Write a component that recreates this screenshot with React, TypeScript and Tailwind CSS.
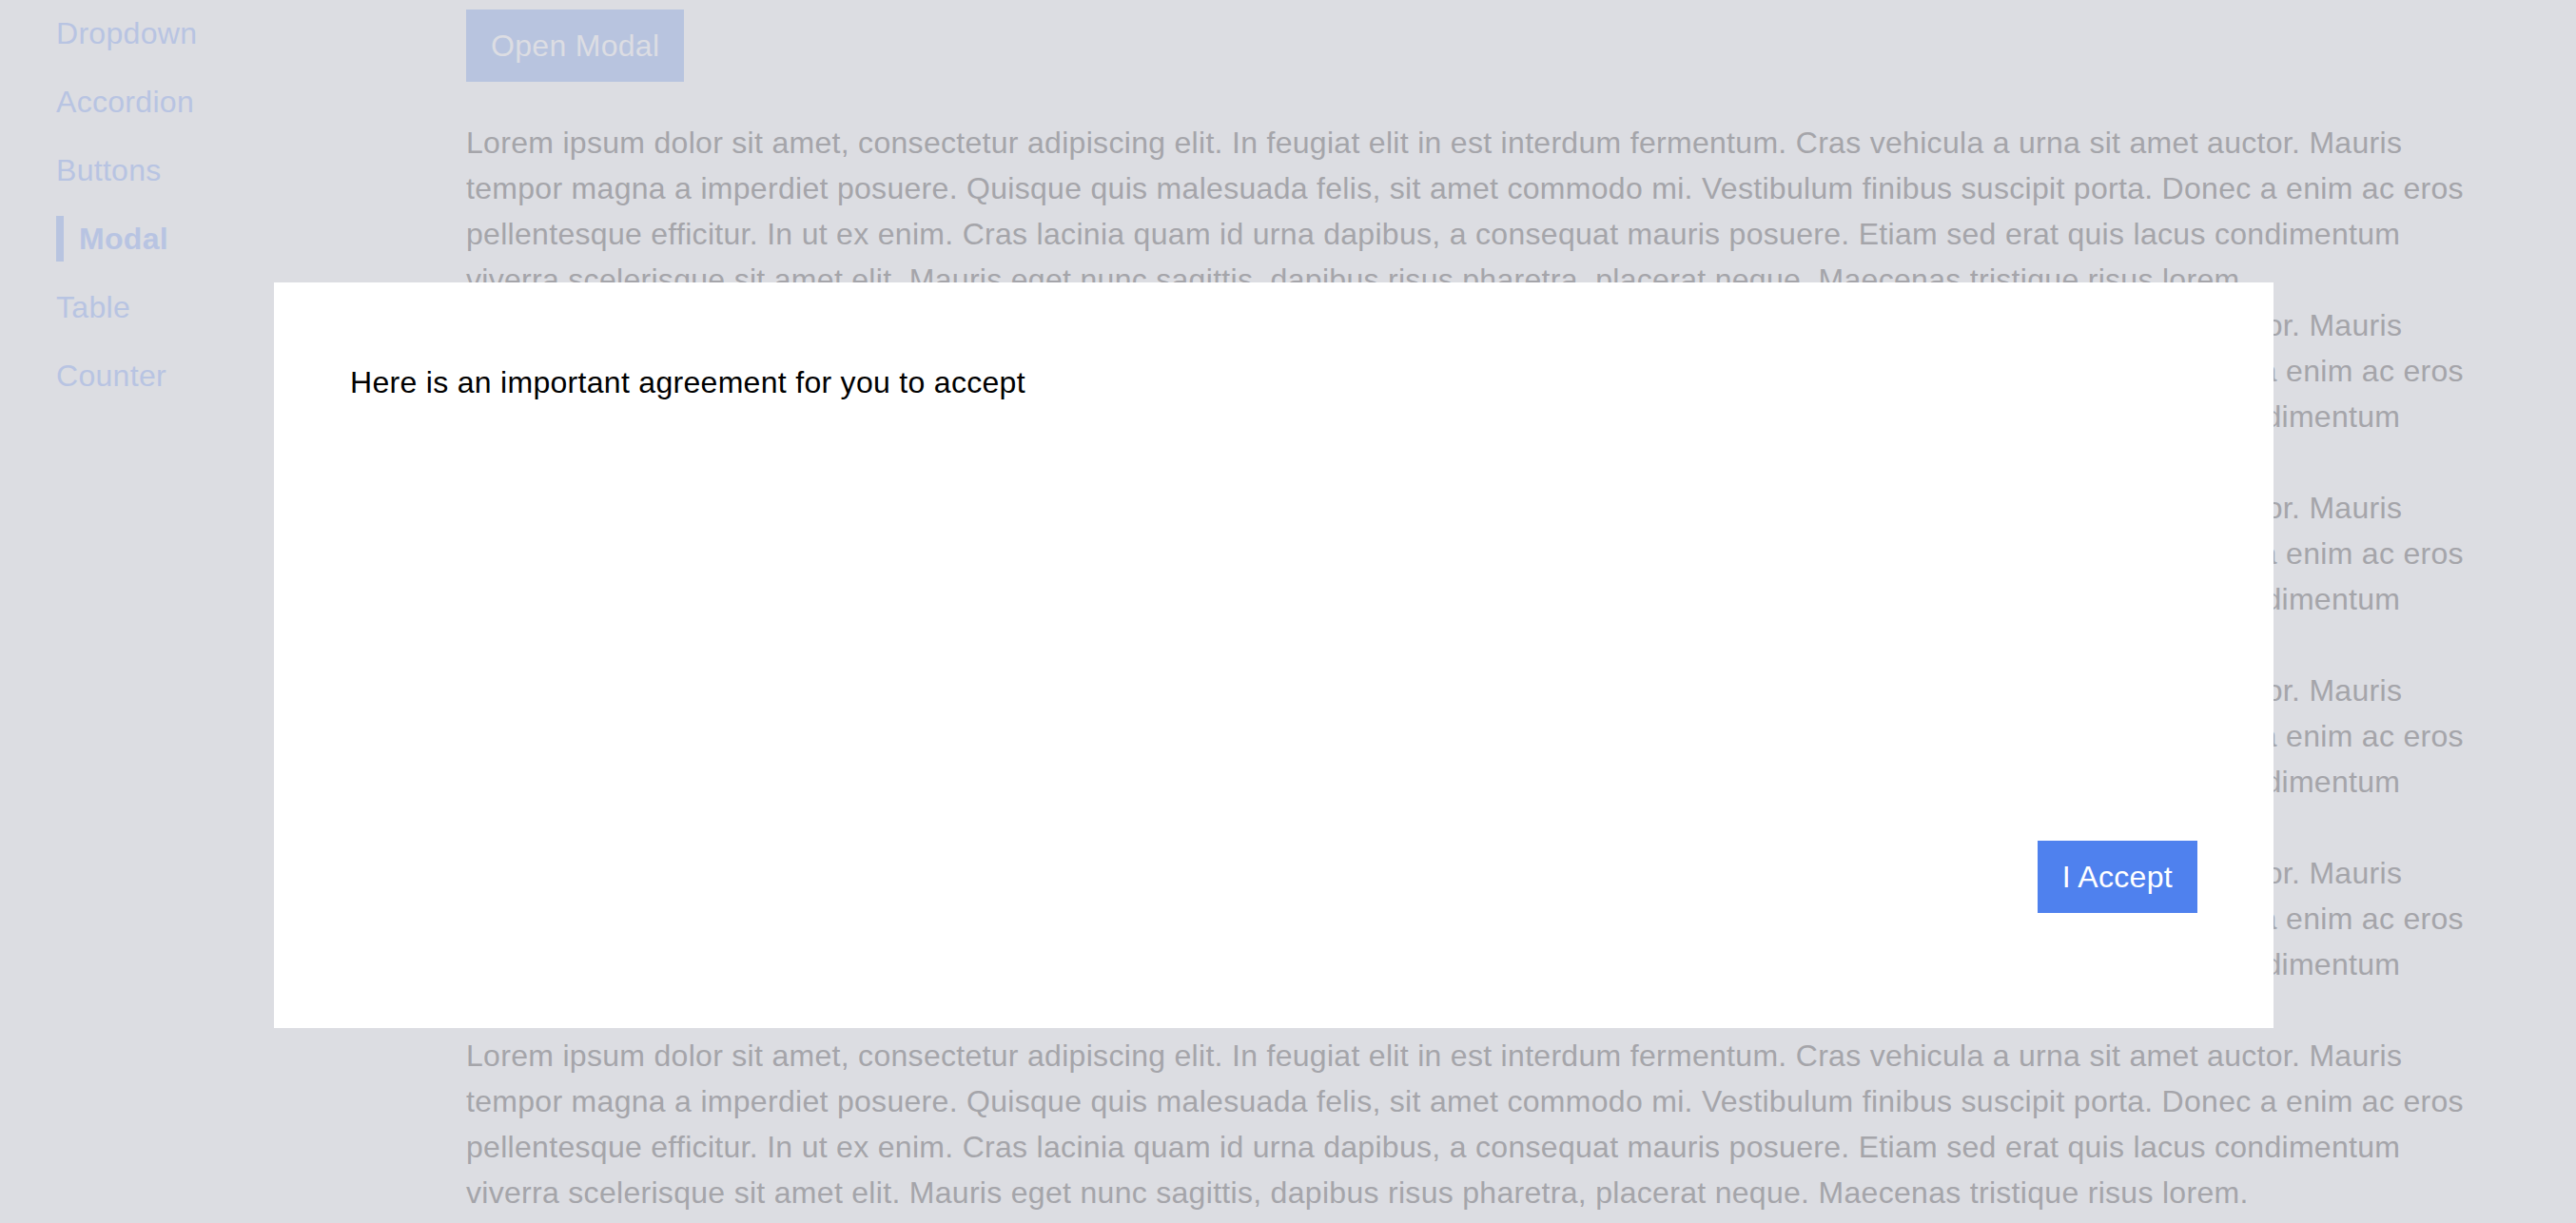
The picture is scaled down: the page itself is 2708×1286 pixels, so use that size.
import React from "react";

const navItems = ["Dropdown", "Accordion", "Buttons", "Modal", "Table", "Counter"];

const lorem =
  "Lorem ipsum dolor sit amet, consectetur adipiscing elit. In feugiat elit in est interdum fermentum. Cras vehicula a urna sit amet auctor. Mauris tempor magna a imperdiet posuere. Quisque quis malesuada felis, sit amet commodo mi. Vestibulum finibus suscipit porta. Donec a enim ac eros pellentesque efficitur. In ut ex enim. Cras lacinia quam id urna dapibus, a consequat mauris posuere. Etiam sed erat quis lacus condimentum viverra scelerisque sit amet elit. Mauris eget nunc sagittis, dapibus risus pharetra, placerat neque. Maecenas tristique risus lorem.";

export default function App() {
  return (
    <div className="relative h-[1286px] overflow-hidden bg-[#dcdde2] font-['Liberation_Sans',Arial,sans-serif] text-[32px] leading-[48px] tracking-[0.3px]">
      <div className="flex">
        {/* sidebar */}
        <nav className="flex w-[490px] shrink-0 flex-col gap-6 pl-[59px] pt-[11px] text-[#b8c4e2]">
          {navItems.map((item) =>
            item === "Modal" ? (
              <span key={item} className="border-l-8 border-[#b8c4e0] pl-4 font-bold">
                {item}
              </span>
            ) : (
              <span key={item}>{item}</span>
            )
          )}
        </nav>

        {/* main content */}
        <main className="w-[2110px] pt-[10px]">
          <button className="bg-[#b8c4df] px-[26px] py-[14px] text-[#dcdde3]">Open Modal</button>
          <div className="mt-10 text-[#a5a5aa]">
            {Array.from({ length: 6 }).map((_, i) => (
              <p key={i}>{lorem}</p>
            ))}
          </div>
        </main>
      </div>

      {/* modal */}
      <div className="absolute left-[288px] top-[297px] flex h-[784px] w-[2102px] flex-col justify-between bg-white px-[80px] pb-[121px] pt-[81px]">
        <p className="text-black">Here is an important agreement for you to accept</p>
        <button className="self-end bg-[#4f81ee] px-[26px] py-[14px] text-white">I Accept</button>
      </div>
    </div>
  );
}
